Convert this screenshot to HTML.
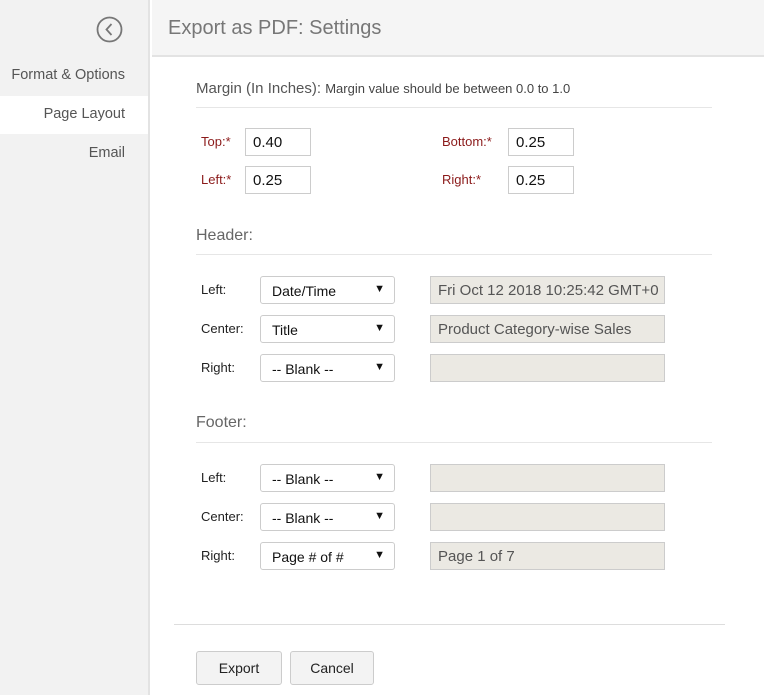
<!DOCTYPE html>
<html><head><style>
*{margin:0;padding:0;box-sizing:border-box}
body{width:764px;height:695px;position:relative;background:#fff;font-family:"Liberation Sans",sans-serif;overflow:hidden;color:#333}
.a{position:absolute}
.side{left:0;top:0;width:150px;height:695px;background:#f2f2f2;border-right:2px solid #e3e3e3}
.nav{left:0;width:125px;font-size:14.5px;color:#555;text-align:right;white-space:nowrap}
.lbl{font-size:13px;color:#222}
.red{color:#8b1a1a}
.inp{border:1px solid #ccc;height:28px;font-size:15px;padding:5px 7px;color:#111;background:#fff}
.sel{border:1px solid #ccc;border-radius:3px;height:28px;width:135px;font-size:14px;padding:6px 11px;color:#111;background:#fff}
.sel:after{content:"\25BC";position:absolute;right:9px;top:6px;font-size:11px}
.ro{background:#ebe9e3;border:1px solid #ccc;height:28px;width:235px;font-size:15px;padding:5px 7px;color:#555;white-space:nowrap;overflow:hidden}
.hr{height:1px;background:#e6e6e6}
.sec{font-size:16px;color:#666}
.btn{border:1px solid #ccc;border-radius:3px;background:#f3f3f3;height:34px;font-size:14px;color:#222;text-align:center;line-height:32px}
</style></head><body>
<div class="a side"></div>
<svg class="a" style="left:96px;top:16px" width="27" height="27"><circle cx="13.5" cy="13.5" r="12" fill="none" stroke="#777" stroke-width="1.8"/><path d="M15.5 8L10.5 13.5L15.5 19" fill="none" stroke="#777" stroke-width="1.8"/></svg>
<div class="a nav" style="top:67px">Format &amp; Options</div>
<div class="a" style="left:0;top:96px;width:148px;height:38px;background:#fff"></div>
<div class="a nav" style="top:106px">Page Layout</div>
<div class="a nav" style="top:145px">Email</div>
<div class="a" style="left:152px;top:0;width:612px;height:57px;background:#f5f5f5;border-bottom:2px solid #e3e3e3"></div>
<div class="a" style="left:168px;top:17px;font-size:20px;color:#777">Export as PDF: Settings</div>
<div class="a" style="left:196px;top:80px;font-size:15px;color:#555">Margin (In Inches): <span style="font-size:13px;color:#444">Margin value should be between 0.0 to 1.0</span></div>
<div class="a hr" style="left:196px;top:107px;width:516px"></div>
<div class="a lbl red" style="left:201px;top:134px">Top:*</div>
<div class="a inp" style="left:245px;top:128px;width:66px">0.40</div>
<div class="a lbl red" style="left:201px;top:172px">Left:*</div>
<div class="a inp" style="left:245px;top:166px;width:66px">0.25</div>
<div class="a lbl red" style="left:442px;top:134px">Bottom:*</div>
<div class="a inp" style="left:508px;top:128px;width:66px">0.25</div>
<div class="a lbl red" style="left:442px;top:172px">Right:*</div>
<div class="a inp" style="left:508px;top:166px;width:66px">0.25</div>
<div class="a sec" style="left:196px;top:227px">Header:</div>
<div class="a hr" style="left:196px;top:254px;width:516px"></div>
<div class="a lbl" style="left:201px;top:282px">Left:</div>
<div class="a sel" style="left:260px;top:276px">Date/Time</div>
<div class="a ro" style="left:430px;top:276px">Fri Oct 12 2018 10:25:42 GMT+0</div>
<div class="a lbl" style="left:201px;top:321px">Center:</div>
<div class="a sel" style="left:260px;top:315px">Title</div>
<div class="a ro" style="left:430px;top:315px">Product Category-wise Sales</div>
<div class="a lbl" style="left:201px;top:360px">Right:</div>
<div class="a sel" style="left:260px;top:354px">-- Blank --</div>
<div class="a ro" style="left:430px;top:354px"></div>
<div class="a sec" style="left:196px;top:414px">Footer:</div>
<div class="a hr" style="left:196px;top:442px;width:516px"></div>
<div class="a lbl" style="left:201px;top:470px">Left:</div>
<div class="a sel" style="left:260px;top:464px">-- Blank --</div>
<div class="a ro" style="left:430px;top:464px"></div>
<div class="a lbl" style="left:201px;top:509px">Center:</div>
<div class="a sel" style="left:260px;top:503px">-- Blank --</div>
<div class="a ro" style="left:430px;top:503px"></div>
<div class="a lbl" style="left:201px;top:548px">Right:</div>
<div class="a sel" style="left:260px;top:542px">Page # of #</div>
<div class="a ro" style="left:430px;top:542px">Page 1 of 7</div>
<div class="a hr" style="left:174px;top:624px;width:551px;background:#ddd"></div>
<div class="a btn" style="left:196px;top:651px;width:86px">Export</div>
<div class="a btn" style="left:290px;top:651px;width:84px">Cancel</div>
</body></html>
